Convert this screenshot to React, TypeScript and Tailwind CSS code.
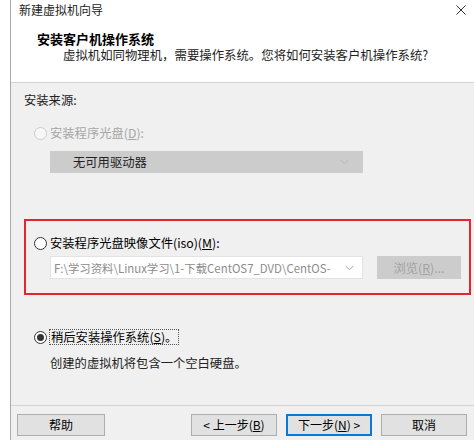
import React from "react";

const font = "font-['Microsoft_YaHei','Noto_Sans_CJK_SC',sans-serif]";

function Radio({ state }: { state: "disabled" | "off" | "on" }) {
  const ring =
    state === "disabled" ? "border-[#cccccc] bg-[#f7f7f7]" : "border-[#333333] bg-white";
  return (
    <span className={`w-[13px] h-[13px] rounded-full border ${ring} flex items-center justify-center shrink-0`}>
      {state === "on" && <span className="w-[7px] h-[7px] rounded-full bg-[#333333]" />}
    </span>
  );
}

function Chevron({ color }: { color: string }) {
  return (
    <svg width="9" height="6" viewBox="0 0 9 6" className="shrink-0">
      <path d="M0.5 0.8 L4.5 4.8 L8.5 0.8" fill="none" stroke={color} strokeWidth="1" />
    </svg>
  );
}

function Button({ children, primary }: { children: React.ReactNode; primary?: boolean }) {
  return (
    <div
      className={`h-[22px] flex items-center justify-center text-[12px] leading-none text-black ${
        primary ? "w-[86px] border-2 border-[#0a78d7] bg-[#e1e1e1]" : "w-[86px] border border-[#adadad] bg-[#e1e1e1]"
      }`}
    >
      {children}
    </div>
  );
}

export default function App() {
  return (
    <div className={`w-[474px] h-[440px] overflow-hidden bg-white pl-[10px] ${font}`}>
      <div className="h-full border-l border-[#a9a9a9] flex flex-col">
        {/* title bar */}
        <div className="h-[19px] flex items-center justify-between pl-[8px] pr-[8px] bg-white">
          <span className="text-[12px] leading-none text-[#222]">新建虚拟机向导</span>
          <svg width="10" height="10" viewBox="0 0 10 10">
            <path d="M0.5 0.5 L9.5 9.5 M9.5 0.5 L0.5 9.5" stroke="#333" strokeWidth="1" />
          </svg>
        </div>

        {/* header */}
        <div className="h-[64px] bg-white border-b border-[#d4d4d4] pl-[26px] pt-[12px]">
          <div className="text-[13px] font-bold leading-[16px] text-black">安装客户机操作系统</div>
          <div className="pl-[26px] text-[12.4px] leading-[16px] text-[#222]">
            虚拟机如同物理机，需要操作系统。您将如何安装客户机操作系统?
          </div>
        </div>

        {/* content */}
        <div className="h-[323px] bg-[#f0f0f0] border-b border-[#d4d4d4] pl-[13px] pt-[9px] text-[12.3px] leading-[16px]">
          <div className="text-[#222]">安装来源:</div>

          <div className="mt-[17px] ml-[10px] flex items-center gap-[3px] text-[#a6a6a6]">
            <Radio state="disabled" />
            <span>
              安装程序光盘(<span className="underline">D</span>):
            </span>
          </div>

          <div className="mt-[10px] ml-[26px] w-[313px] h-[22px] bg-[#cccccc] flex items-center justify-between pl-[23px] pr-[14px]">
            <span className="text-[#222]">无可用驱动器</span>
            <Chevron color="#b8b8b8" />
          </div>

          <div className="mt-[46px] w-[447px] h-[76px] border-2 border-[#e3262e] pt-[14px]">
            <div className="ml-[8px] flex items-center gap-[3px] text-black">
              <Radio state="off" />
              <span>
                安装程序光盘映像文件(iso)(<span className="underline">M</span>):
              </span>
            </div>
            <div className="mt-[5px] ml-[24px] flex items-center gap-[14px]">
              <div className="w-[313px] h-[23px] bg-white border border-[#e3e3e3] flex items-center justify-between pl-[3px] pr-[8px]">
                <span className="text-[11.4px] text-[#8c8c8c] whitespace-nowrap">
                  F:\学习资料\Linux学习\1-下载CentOS7_DVD\CentOS-
                </span>
                <Chevron color="#a8a8a8" />
              </div>
              <div className="w-[84px] h-[23px] bg-[#cccccc] flex items-center justify-center text-[#a3a3a3]">
                <span>
                  浏览(<span className="underline">R</span>)...
                </span>
              </div>
            </div>
          </div>

          <div className="mt-[34px] ml-[10px] flex items-center gap-[2px] text-black">
            <Radio state="on" />
            <span className="border border-dotted border-[#555] px-[1px] leading-[14px]">
              稍后安装操作系统(<span className="underline">S</span>)。
            </span>
          </div>

          <div className="mt-[10px] ml-[26px] text-[#222]">创建的虚拟机将包含一个空白硬盘。</div>
        </div>

        {/* footer */}
        <div className="flex-1 bg-[#f0f0f0] pt-[8px] pl-[6px] flex items-start">
          <div className="w-[88px] h-[22px] border border-[#adadad] bg-[#e1e1e1] flex items-center justify-center text-[12px] leading-none text-black">
            帮助
          </div>
          <div className="ml-[86px] flex gap-[9px]">
            <Button>
              &lt; 上一步(<span className="underline">B</span>)
            </Button>
            <Button primary>
              下一步(<span className="underline">N</span>) &gt;
            </Button>
            <Button>取消</Button>
          </div>
        </div>
      </div>
    </div>
  );
}
